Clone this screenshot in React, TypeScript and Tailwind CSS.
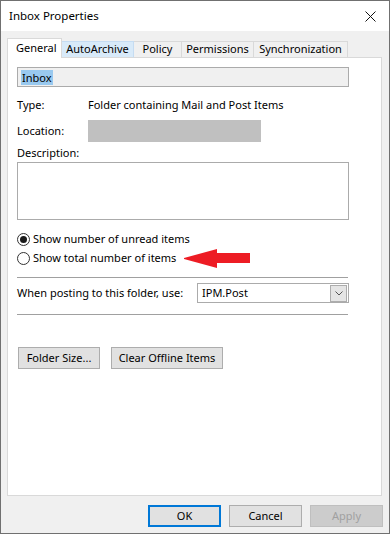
import React from "react";

const font = { fontFamily: '"Noto Sans", "Open Sans", Arial, sans-serif' };

function Radio({ checked }: { checked?: boolean }) {
  return (
    <span className="w-[13px] h-[13px] rounded-full border border-[#333333] bg-white flex items-center justify-center mr-[3px] shrink-0">
      {checked && <span className="w-[7px] h-[7px] rounded-full bg-[#1a1a1a]" />}
    </span>
  );
}

export default function App() {
  return (
    <div className="w-[391px] h-[536px] bg-white overflow-hidden text-[11px] text-black whitespace-nowrap" style={font}>
      <div className="w-[390px] h-[534px] border border-[#707070] flex flex-col bg-[#f0f0f0]">
        {/* Title bar */}
        <div className="h-[30px] bg-white flex items-center justify-between pl-[8px] pr-[9px] shrink-0">
          <span className="text-[11.5px] leading-none">Inbox Properties</span>
          <svg width="11" height="11" viewBox="0 0 11 11" className="mr-[4px]">
            <path d="M0.5 0.5 L10.5 10.5 M10.5 0.5 L0.5 10.5" stroke="#111" strokeWidth="1" fill="none" />
          </svg>
        </div>

        {/* Body */}
        <div className="flex-1 flex flex-col pl-[6px] pr-[7px] pt-[7px]">
          {/* Tabs */}
          <div className="flex items-end h-[20px] relative z-10 -mb-px">
            <div className="h-[20px] w-[55px] bg-white border-l border-t border-r border-[#d9d9d9] flex items-center pl-[8px] pb-[1px]">
              General
            </div>
            <div className="h-[17px] w-[72px] bg-[#d8eaf9] border border-[#c5dcf2] border-l-0 flex items-center justify-center border-b-[#d9d9d9]">
              AutoArchive
            </div>
            <div className="h-[17px] w-[48px] bg-[#f0f0f0] border border-[#d9d9d9] border-l-0 flex items-center justify-center">
              Policy
            </div>
            <div className="h-[17px] w-[72px] bg-[#f0f0f0] border border-[#d9d9d9] border-l-0 flex items-center justify-center">
              Permissions
            </div>
            <div className="h-[17px] w-[94px] bg-[#f0f0f0] border border-[#d9d9d9] border-l-0 flex items-center justify-center">
              Synchronization
            </div>
          </div>

          {/* Panel */}
          <div className="h-[439px] bg-white border border-[#d9d9d9] pl-[9px] pt-[9px] flex flex-col relative">
            <div className="w-[332px] h-[20px] bg-[#f0f0f0] border border-[#ababab] flex items-center pl-[3px]">
              <span className="bg-[#99c9ef] leading-[15px] px-[1px]">Inbox</span>
            </div>

            <div className="flex h-[16px] mt-[10px] items-center">
              <span className="w-[71px]">Type:</span>
              <span>Folder containing Mail and Post Items</span>
            </div>

            <div className="flex h-[22px] mt-[7px] items-center">
              <span className="w-[71px]">Location:</span>
              <div className="w-[173px] h-[22px] bg-[#c0c0c0]" />
            </div>

            <div className="h-[16px] mt-[3px] flex items-center">Description:</div>

            <div className="w-[332px] h-[58px] mt-[1px] bg-white border border-[#ababab]" />

            <div className="mt-[10px] h-[19px] flex items-center">
              <Radio checked />
              <span>Show number of unread items</span>
            </div>
            <div className="h-[19px] flex items-center relative">
              <Radio />
              <span>Show total number of items</span>
              <svg
                width="67"
                height="20"
                viewBox="0 0 67 20"
                className="absolute left-[167px] top-[0px]"
              >
                <path d="M0 9 L33 0 L33 4 L66 4 L66 14 L33 14 L33 19 L0 10 Z" fill="#ed1c24" />
              </svg>
            </div>

            <div className="w-[331px] h-px bg-[#a0a0a0] mt-[9px]" />

            <div className="flex items-center mt-[5px] h-[20px]">
              <span className="w-[180px]">When posting to this folder, use:</span>
              <div className="w-[152px] h-[20px] bg-white border border-[#ababab] flex items-center justify-between pl-[4px] pr-[1px]">
                <span>IPM.Post</span>
                <div className="w-[17px] h-[17px] bg-[#e5e5e5] border border-[#adadad] flex items-center justify-center">
                  <svg width="8" height="5" viewBox="0 0 8 5">
                    <path d="M0.5 0.5 L4 4 L7.5 0.5" stroke="#555" strokeWidth="1" fill="none" />
                  </svg>
                </div>
              </div>
            </div>

            <div className="w-[331px] h-px bg-[#a0a0a0] mt-[11px]" />

            <div className="flex mt-[32px] ml-[1px] gap-[11px]">
              <button className="w-[82px] h-[22px] bg-[#e1e1e1] border border-[#adadad] flex items-center justify-center">
                Folder Size...
              </button>
              <button className="w-[112px] h-[22px] bg-[#e1e1e1] border border-[#adadad] flex items-center justify-center">
                Clear Offline Items
              </button>
            </div>
          </div>

          {/* Footer */}
          <div className="flex justify-end gap-[8px] pt-[9px] -mr-[1px]">
            <button className="w-[73px] h-[22px] bg-[#e1e1e1] border-2 border-[#0078d7] flex items-center justify-center">
              OK
            </button>
            <button className="w-[73px] h-[22px] bg-[#e1e1e1] border border-[#adadad] flex items-center justify-center">
              Cancel
            </button>
            <button className="w-[73px] h-[22px] bg-[#cccccc] border border-[#bfbfbf] text-[#a0a0a0] flex items-center justify-center">
              Apply
            </button>
          </div>
        </div>
      </div>
    </div>
  );
}
